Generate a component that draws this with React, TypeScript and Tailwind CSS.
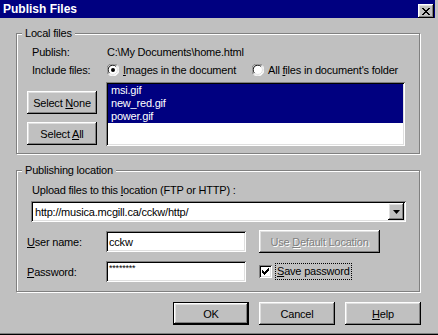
import type { ReactNode } from "react";

// raised / sunken bevels, win9x style
const raised =
  "bg-[#c0c0c0] shadow-[inset_-1px_-1px_0_#000,inset_1px_1px_0_#fff,inset_-2px_-2px_0_#808080,inset_2px_2px_0_#dfdfdf]";
const sunken =
  "bg-white shadow-[inset_1px_1px_0_#808080,inset_-1px_-1px_0_#fff,inset_2px_2px_0_#000,inset_-2px_-2px_0_#dfdfdf]";

function GroupBox({
  label,
  height,
  children,
}: {
  label: string;
  height: string;
  children: ReactNode;
}) {
  return (
    <div
      className={
        "relative ml-[16px] w-[404px] border border-[#808080] shadow-[inset_1px_1px_0_#fff,1px_1px_0_#fff] " +
        height
      }
    >
      <span className="absolute left-[5px] top-[-8px] bg-[#c0c0c0] px-[3px] leading-[14px]">
        {label}
      </span>
      {children}
    </div>
  );
}

function Button({
  children,
  width,
  disabled,
}: {
  children: ReactNode;
  width: string;
  disabled?: boolean;
}) {
  return (
    <div
      className={
        "flex items-center justify-center " +
        raised +
        " " +
        width +
        (disabled ? " text-[#808080] [text-shadow:1px_1px_0_#fff]" : "")
      }
    >
      <span className="leading-[14px]">{children}</span>
    </div>
  );
}

function Radio({ checked }: { checked?: boolean }) {
  return (
    <svg width="12" height="12" viewBox="0 0 12 12" className="shrink-0">
      <circle cx="6" cy="6" r="5.5" fill="#fff" />
      <path d="M1.4 10.2 A5.5 5.5 0 0 1 10.2 1.4" stroke="#808080" fill="none" />
      <path d="M10.2 1.4 A5.5 5.5 0 0 1 1.4 10.2" stroke="#fff" fill="none" />
      <path d="M2.5 9.1 A4.3 4.3 0 0 1 9.1 2.5" stroke="#000" fill="none" />
      <path d="M9.1 2.5 A4.3 4.3 0 0 1 2.5 9.1" stroke="#dfdfdf" fill="none" />
      {checked && <circle cx="6" cy="6" r="2" fill="#000" />}
    </svg>
  );
}

export default function App() {
  return (
    <div
      className="h-[335px] w-[438px] overflow-hidden bg-[#c0c0c0] text-[11px] tracking-[-0.2px] text-black shadow-[inset_0_-1px_0_#000,inset_0_-2px_0_#808080]"
      style={{ fontFamily: '"Liberation Sans", Arial, sans-serif' }}
    >
      {/* Title bar */}
      <div className="mr-[3px] flex h-[18px] items-center justify-between bg-[#000080] pl-[3px] pr-[1px]">
        <span className="text-[12px] font-bold leading-[18px] tracking-normal text-white">
          Publish Files
        </span>
        <div className={"mt-[4px] flex h-[14px] w-[16px] items-center justify-center self-start " + raised}>
          <svg width="8" height="7" viewBox="0 0 8 7">
            <path
              d="M0 0h2v1h1v1h2v-1h1v-1h2v1h-1v1h-1v1h-1v1h1v1h1v1h1v1h-2v-1h-1v-1h-2v1h-1v1h-2v-1h1v-1h1v-1h1v-1h-1v-1h-1v-1h-1z"
              fill="#000"
            />
          </svg>
        </div>
      </div>

      {/* Local files */}
      <div className="mt-[15px]">
        <GroupBox label="Local files" height="h-[121px]">
          <div className="flex flex-col pt-[11px]">
            <div className="flex h-[14px] items-center pl-[15px] leading-[14px]">
              <span className="w-[75px]">Publish:</span>
              <span>C:\My Documents\home.html</span>
            </div>
            <div className="mt-[4px] flex h-[14px] items-center pl-[15px] leading-[14px]">
              <span className="w-[75px]">Include files:</span>
              <Radio checked />
              <span className="ml-[4px]">
                <u>I</u>mages in the document
              </span>
              <span className="ml-[16px]">
                <Radio />
              </span>
              <span className="ml-[4px]">
                All <u>f</u>iles in document's folder
              </span>
            </div>
            <div className="mt-[5px] flex pl-[10px]">
              <div className="mt-[9px] flex w-[70px] flex-col gap-[8px]">
                <Button width="w-[70px] h-[23px]">
                  Select <u>N</u>one
                </Button>
                <Button width="w-[70px] h-[23px]">
                  Select <u>A</u>ll
                </Button>
              </div>
              <div className={"ml-[9px] h-[64px] w-[299px] p-[2px] " + sunken}>
                {["msi.gif", "new_red.gif", "power.gif"].map((f) => (
                  <div
                    key={f}
                    className="h-[13px] bg-[#000080] pl-[3px] leading-[13px] text-white"
                  >
                    {f}
                  </div>
                ))}
              </div>
            </div>
          </div>
        </GroupBox>
      </div>

      {/* Publishing location */}
      <div className="mt-[16px]">
        <GroupBox label="Publishing location" height="h-[122px]">
          <div className="flex flex-col pl-[10px] pt-[12px]">
            <div className="ml-[5px] h-[14px] leading-[14px]">
              Upload files to this <u>l</u>ocation (FTP or HTTP) :
            </div>
            <div className={"relative ml-[4px] mt-[4px] flex h-[21px] w-[375px] items-center " + sunken}>
              <span className="pl-[4px] leading-[14px]">http://musica.mcgill.ca/cckw/http/</span>
              <div className={"absolute right-[2px] top-[2px] flex h-[17px] w-[16px] items-center justify-center " + raised}>
                <svg width="7" height="4" viewBox="0 0 7 4">
                  <path d="M0 0h7l-3.5 4z" fill="#000" />
                </svg>
              </div>
            </div>
            <div className="mt-[8px] flex h-[23px] items-center">
              <span className="w-[79px] leading-[14px]">
                <u>U</u>ser name:
              </span>
              <div className={"flex h-[21px] w-[140px] items-center pl-[3px] " + sunken}>
                <span className="leading-[14px]">cckw</span>
              </div>
              <div className="ml-[13px]">
                <Button width="w-[121px] h-[23px]" disabled>
                  Use <u>D</u>efault Location
                </Button>
              </div>
            </div>
            <div className="mt-[8px] flex h-[21px] items-center">
              <span className="w-[79px] leading-[14px]">
                <u>P</u>assword:
              </span>
              <div className={"flex h-[21px] w-[140px] items-start pl-[3px] pt-[3px] " + sunken}>
                <span className="text-[9px] leading-[9px]">********</span>
              </div>
              <div className={"ml-[13px] flex h-[13px] w-[13px] items-center justify-center " + sunken}>
                <svg width="7" height="7" viewBox="0 0 7 7">
                  <path d="M0 2h1v1h1v1h1v-1h1v-1h1v-1h1v-1h1v3h-1v1h-1v1h-1v1h-1v1h-1v-1h-1v-1h-1z" fill="#000" />
                </svg>
              </div>
              <span className="ml-[3px] border border-dotted border-black px-[1px] leading-[15px]">
                <u>S</u>ave password
              </span>
            </div>
          </div>
        </GroupBox>
      </div>

      {/* Dialog buttons */}
      <div className="mt-[10px] flex justify-end gap-[10px] pr-[17px]">
        <div className="border border-black">
          <Button width="w-[74px] h-[21px]">OK</Button>
        </div>
        <Button width="w-[76px] h-[23px]">Cancel</Button>
        <Button width="w-[76px] h-[23px]">
          <u>H</u>elp
        </Button>
      </div>
    </div>
  );
}
